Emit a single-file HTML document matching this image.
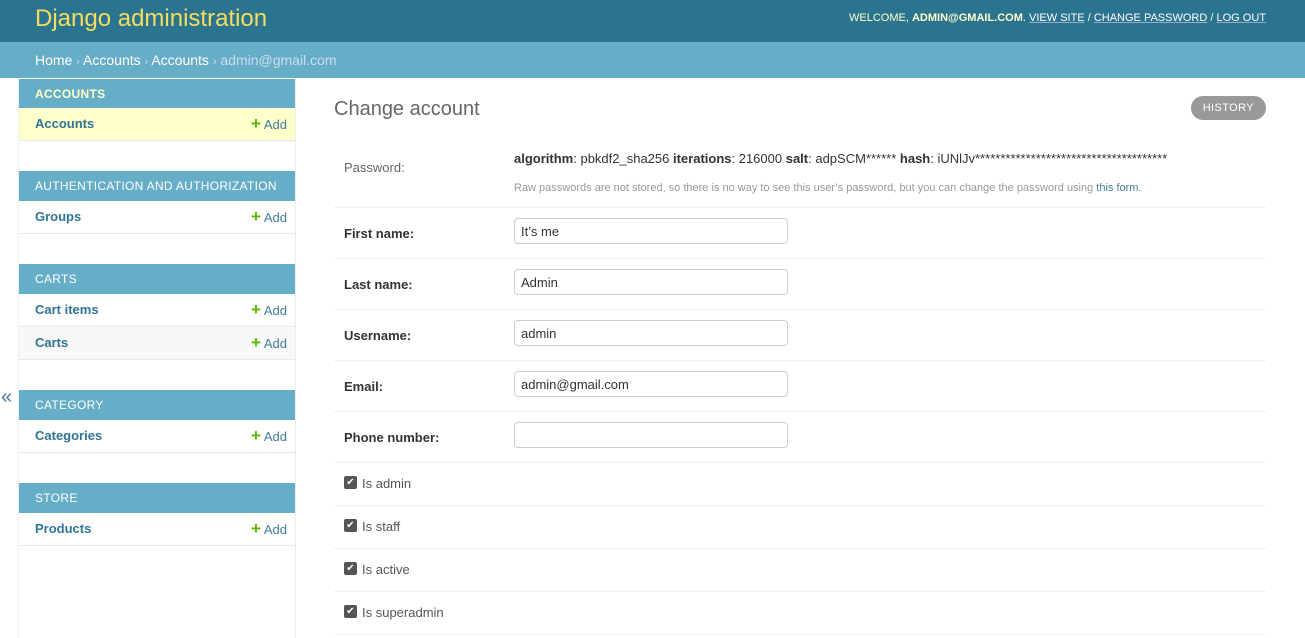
<!DOCTYPE html>
<html><head><style>
body{margin:0;font-family:"Liberation Sans",sans-serif;font-size:13px;color:#333;background:#fff;width:1305px;height:631px;overflow:hidden;position:relative}
#hdr{height:42px;background:#2b7490;position:relative}
#hdr .t{position:absolute;left:35px;top:5px;font-size:24px;color:#f5dd5d}
#hdr .u{position:absolute;right:39px;top:12px;font-size:11px;color:#ffc;letter-spacing:0}
#hdr .u a{color:#fff;text-decoration:underline;text-decoration-color:#9ac}
#bc{height:36px;background:#66adc7;color:#cde;font-size:14px;line-height:36px;padding-left:35px}
#bc a{color:#fff}
#bc .s{color:#cde;font-size:11px}
#side{position:absolute;left:18px;top:78px;width:276px;height:560px;border-right:1px solid #eee;border-left:1px solid #eee}
.cap{background:#66adc7;color:#fff;font-size:12px;height:30px;line-height:30px;padding-left:16px;letter-spacing:.3px;margin-top:30px}
.cap.f{margin-top:1px;height:29px;font-weight:bold;color:#ffc}
.row{height:32px;line-height:32px;border-bottom:1px solid #e8e8e8;padding-left:16px;position:relative;font-weight:bold;color:#2f7595}
.row.hl{background:#ffc}
.row.alt{background:#f8f8f8}
.add{position:absolute;right:8px;top:0;font-weight:normal;color:#447e9b}
.add b{color:#5b0;font-size:17px}
#tog{position:absolute;left:1px;top:386px;color:#447e9b;font-size:20px}
#main{position:absolute;left:334px;top:78px;width:932px}
h1{font-weight:normal;font-size:20px;color:#666;margin:20px 0 0}
.hist{position:absolute;right:0;top:18px;background:#999;color:#fff;font-size:11px;border-radius:13px;padding:6px 12px;letter-spacing:.4px}
.fr{border-bottom:1px solid #eee;position:relative;height:50px}
.fr label{position:absolute;left:10px;top:18px;font-weight:bold;color:#333}
.fr input{position:absolute;left:180px;top:10px;width:260px;height:24px;border:1px solid #ccc;border-radius:4px;padding:0 6px;font-family:inherit;font-size:13px;color:#333}
.ck{height:42px;border-bottom:1px solid #eee;position:relative}
.ck span{position:absolute;left:10px;top:13px;width:13px;height:13px;background:#555;border-radius:2px;color:#fff;font-size:10px;line-height:13px;text-align:center}
.ck em{position:absolute;left:28px;top:13px;font-style:normal;color:#555}
</style></head><body>
<div id="hdr"><div class="t">Django administration</div>
<div class="u">WELCOME, <b>ADMIN@GMAIL.COM</b>. <a>VIEW SITE</a> / <a>CHANGE PASSWORD</a> / <a>LOG OUT</a></div></div>
<div id="bc"><a>Home</a> <span class="s">›</span> <a>Accounts</a> <span class="s">›</span> <a>Accounts</a> <span class="s">›</span> admin@gmail.com</div>
<div id="side">
<div class="cap f">ACCOUNTS</div>
<div class="row hl">Accounts<span class="add"><b>+</b> Add</span></div>
<div class="cap">AUTHENTICATION AND AUTHORIZATION</div>
<div class="row">Groups<span class="add"><b>+</b> Add</span></div>
<div class="cap">CARTS</div>
<div class="row">Cart items<span class="add"><b>+</b> Add</span></div>
<div class="row alt">Carts<span class="add"><b>+</b> Add</span></div>
<div class="cap">CATEGORY</div>
<div class="row">Categories<span class="add"><b>+</b> Add</span></div>
<div class="cap">STORE</div>
<div class="row">Products<span class="add"><b>+</b> Add</span></div>
</div>
<div id="tog">«</div>
<div id="main">
<h1>Change account</h1><span class="hist">HISTORY</span>
<div style="height:84px;border-bottom:1px solid #eee;position:relative;margin-top:2px">
<div style="position:absolute;left:10px;top:37px;color:#666">Password:</div>
<div style="position:absolute;left:180px;top:28px;white-space:nowrap"><b>algorithm</b>: pbkdf2_sha256 <b>iterations</b>: 216000 <b>salt</b>: adpSCM****** <b>hash</b>: iUNlJv**************************************</div>
<div style="position:absolute;left:180px;top:59px;font-size:11px;color:#999;white-space:nowrap">Raw passwords are not stored, so there is no way to see this user’s password, but you can change the password using <span style="color:#447e9b">this form</span>.</div>
</div>
<div class="fr"><label>First name:</label><input value="It’s me"></div>
<div class="fr"><label>Last name:</label><input value="Admin"></div>
<div class="fr"><label>Username:</label><input value="admin"></div>
<div class="fr"><label>Email:</label><input value="admin@gmail.com"></div>
<div class="fr"><label>Phone number:</label><input value=""></div>
<div class="ck"><span>✔</span><em>Is admin</em></div>
<div class="ck"><span>✔</span><em>Is staff</em></div>
<div class="ck"><span>✔</span><em>Is active</em></div>
<div class="ck"><span>✔</span><em>Is superadmin</em></div>
</div>
</body></html>
